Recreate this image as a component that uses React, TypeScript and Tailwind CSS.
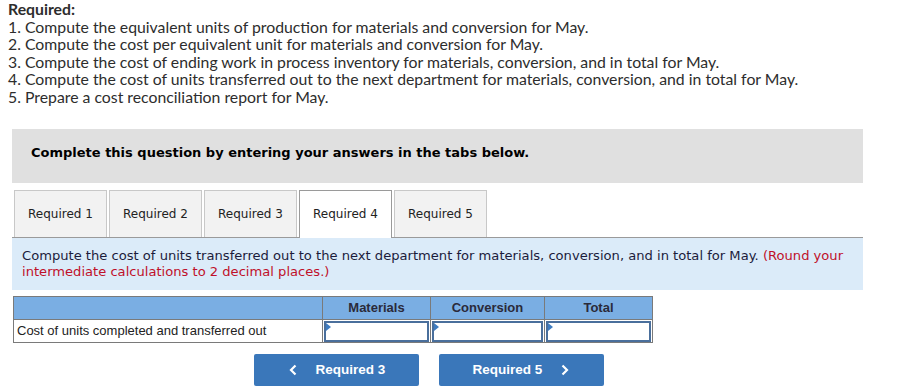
import React from 'react';

const tabs = ['Required 1', 'Required 2', 'Required 3', 'Required 4', 'Required 5'];

const InputCell: React.FC = () => (
  <td className="p-0 border border-[#7a7a7a]">
    <div className="relative h-[21px] mx-px border-2 border-[#4a6f9c] bg-white">
      <span className="absolute left-0 top-0 w-0 h-0 border-t-[4px] border-b-[4px] border-l-[5px] border-t-transparent border-b-transparent border-l-[#3f7cc0]" />
    </div>
  </td>
);

const App: React.FC = () => {
  return (
    <div className="w-[897px] h-[392px] bg-white overflow-hidden">
      <div className="pl-2 text-[15.8px] leading-[17.5px] text-[#2d2d2d] font-['Lato','Open_Sans',sans-serif]">
        <div className="font-bold">Required:</div>
        <div>1. Compute the equivalent units of production for materials and conversion for May.</div>
        <div>2. Compute the cost per equivalent unit for materials and conversion for May.</div>
        <div>3. Compute the cost of ending work in process inventory for materials, conversion, and in total for May.</div>
        <div>4. Compute the cost of units transferred out to the next department for materials, conversion, and in total for May.</div>
        <div>5. Prepare a cost reconciliation report for May.</div>
      </div>

      <div className="ml-3 mt-[24px] w-[851px] h-[54px] bg-[#e0e0e0] pl-[19px] pt-[14px] font-['DejaVu_Sans',Verdana,sans-serif] font-bold text-[13px] text-black">
        Complete this question by entering your answers in the tabs below.
      </div>

      <div className="ml-3 mt-[7px] w-[851px] font-['DejaVu_Sans',Verdana,sans-serif] text-[12px] text-[#222]">
        <div className="flex gap-[2px] pl-[2px] h-[47px] items-end">
          {tabs.map((t) =>
            t === 'Required 4' ? (
              <div
                key={t}
                className="w-[93px] h-[48px] -mb-px pb-px relative z-10 bg-white border border-b-0 border-[#9a9a9a] flex items-center justify-center"
              >
                {t}
              </div>
            ) : (
              <div
                key={t}
                className="w-[93px] h-[47px] bg-[#f2f2f2] border border-b-0 border-[#c8c8c8] flex items-center justify-center"
              >
                {t}
              </div>
            )
          )}
        </div>
        <div className="border-t border-[#9a9a9a] bg-[#dbebf9] h-[53px] pl-[10px] pr-[2px] pt-[10px] leading-[16px] text-[13.1px] text-[#1c1c3c]">
          Compute the cost of units transferred out to the next department for materials, conversion, and in total for May.{' '}
          <span className="text-[#c0102a]">(Round your intermediate calculations to 2 decimal places.)</span>
        </div>
      </div>

      <table className="ml-[13px] mt-[6px] border-collapse font-['Liberation_Sans',Arial,sans-serif] text-[13px] text-[#222]">
        <thead>
          <tr className="h-[23px] bg-[#7aaee3]">
            <th className="w-[309px] border border-[#7a7a7a]" />
            <th className="w-[108px] border border-[#7a7a7a] font-bold text-[#2a2a3a]">Materials</th>
            <th className="w-[114px] border border-[#7a7a7a] font-bold text-[#2a2a3a]">Conversion</th>
            <th className="w-[108px] border border-[#7a7a7a] font-bold text-[#2a2a3a]">Total</th>
          </tr>
        </thead>
        <tbody>
          <tr className="h-[23px]">
            <td className="border border-[#7a7a7a] pl-[3px] text-left">Cost of units completed and transferred out</td>
            <InputCell />
            <InputCell />
            <InputCell />
          </tr>
        </tbody>
      </table>

      <div className="flex gap-[20px] ml-[254px] mt-[11px] font-['Liberation_Sans',Arial,sans-serif] font-bold text-[13.5px] text-white">
        <button className="w-[165px] h-[32px] rounded-[2px] bg-[#3a77ba] flex items-center justify-center gap-[18px]">
          <svg width="10" height="14" viewBox="0 0 10 14" fill="none">
            <path d="M7.5 2.5 L3 7 L7.5 11.5" stroke="white" strokeWidth="2.2" />
          </svg>
          <span>Required 3</span>
        </button>
        <button className="w-[165px] h-[32px] rounded-[2px] bg-[#3a77ba] flex items-center justify-center gap-[18px]">
          <span>Required 5</span>
          <svg width="10" height="14" viewBox="0 0 10 14" fill="none">
            <path d="M2.5 2.5 L7 7 L2.5 11.5" stroke="white" strokeWidth="2.2" />
          </svg>
        </button>
      </div>
    </div>
  );
};

export default App;
